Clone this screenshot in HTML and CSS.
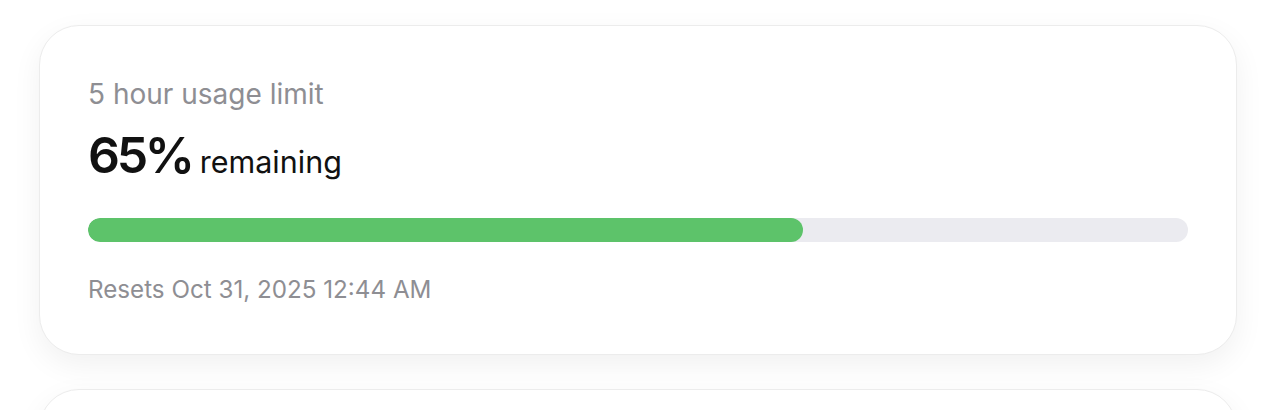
FILE: index.html
```html
<!DOCTYPE html>
<html>
<head>
<meta charset="utf-8">
<link rel="stylesheet" href="styles.css">
</head>
<body>
<div class="page">
  <section class="card">
    <div class="label">5 hour usage limit</div>
    <div class="value"><span class="pct">65%</span><span class="rem">remaining</span></div>
    <div class="track"><div class="fill" style="width: 65%"></div></div>
    <div class="reset">Resets Oct 31, 2025 12:44 AM</div>
  </section>
  <section class="card"></section>
</div>
</body>
</html>
```
FILE: styles.css
```css
html, body {
  margin: 0;
  padding: 0;
  background: #ffffff;
}
body {
  font-family: Inter, "Noto Sans", sans-serif;
  overflow: hidden;
  height: 410px;
}
.page {
  padding: 25px 33px 0 39px;
  display: flex;
  flex-direction: column;
  gap: 34px;
}
.card {
  box-sizing: border-box;
  width: 1198px;
  height: 330px;
  flex-shrink: 0;
  border: 1px solid #ececec;
  border-radius: 40px;
  background: #ffffff;
  box-shadow: 0 10px 30px rgba(0, 0, 0, 0.06);
  padding: 51px 48px 0 48px;
}
.label {
  font-size: 28px;
  color: #8e8e93;
  line-height: 34px;
}
.value {
  margin-top: 14px;
  display: flex;
  align-items: baseline;
  gap: 8px;
  color: #111111;
}
.pct {
  font-size: 50px;
  line-height: 60px;
  font-weight: 600;
  letter-spacing: -3.3px;
}
.rem {
  font-size: 30.5px;
  line-height: 36px;
}
.track {
  margin-top: 33px;
  height: 24px;
  border-radius: 12px;
  background: #ebebf0;
  overflow: hidden;
}
.fill {
  height: 100%;
  background: #5dc36a;
  border-radius: 12px;
}
.reset {
  margin-top: 33px;
  font-size: 24.2px;
  color: #8e8e93;
  line-height: 30px;
}
```
